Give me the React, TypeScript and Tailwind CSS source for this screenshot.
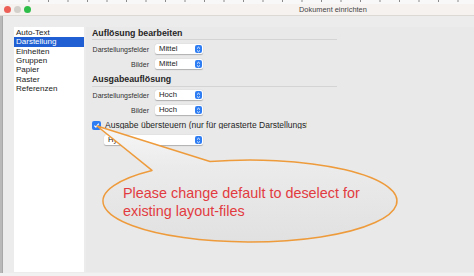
import React from "react";

const font = { fontFamily: '"Liberation Sans", Arial, sans-serif' };

function Stepper() {
  return (
    <div className="w-[7px] h-[8px] rounded-[2px] bg-[#2f7df2] flex items-center justify-center">
      <svg width="5" height="7" viewBox="0 0 5 7">
        <path d="M1 2.6 L2.5 1.2 L4 2.6" stroke="white" strokeWidth="0.9" fill="none" />
        <path d="M1 4.4 L2.5 5.8 L4 4.4" stroke="white" strokeWidth="0.9" fill="none" />
      </svg>
    </div>
  );
}

function Select({ value, wide }: { value: string; wide?: boolean }) {
  return (
    <div
      className={`${wide ? "w-[99px]" : "w-[48px]"} h-[10px] bg-white rounded-[2px] shadow-[0_0.5px_1px_rgba(0,0,0,0.25)] flex items-center justify-between pl-[4px] pr-[1px]`}
    >
      <span className="text-[7.7px] leading-none text-[#222]">{value}</span>
      <Stepper />
    </div>
  );
}

function Row({ label, value }: { label: string; value: string }) {
  return (
    <div className="flex items-center h-[10px]">
      <div className="w-[57px] text-right text-[7px] leading-none text-[#333]">{label}</div>
      <div className="ml-[6px]">
        <Select value={value} />
      </div>
    </div>
  );
}

export default function App() {
  const items = ["Auto-Text", "Darstellung", "Einheiten", "Gruppen", "Papier", "Raster", "Referenzen"];
  const ticks = Array.from({ length: 24 }, (_, i) => 29 + i * 19.5);
  return (
    <div className="relative w-[474px] h-[276px] overflow-hidden bg-[#ececec]" style={font}>
      {/* ruler */}
      <div className="h-[4px] bg-[#f8f8f8]">
        <svg width="474" height="4">
          {ticks.map((x, i) => (
            <line key={i} x1={x} y1="0" x2={x} y2="2" stroke="#8a8a8a" strokeWidth="1" />
          ))}
        </svg>
      </div>
      {/* title bar */}
      <div className="h-[12px] bg-[#f6f2ef] border-b border-[#dcd8d4] flex items-center relative">
        <div className="flex items-center gap-[3px] ml-[4px]">
          <div className="w-[7px] h-[7px] rounded-full bg-[#ec5f57]" />
          <div className="w-[7px] h-[7px] rounded-full bg-[#d3cfcb]" />
          <div className="w-[7px] h-[7px] rounded-full bg-[#2fbd4a]" />
        </div>
        <div className="ml-[268px] text-[7.4px] leading-none text-[#444]">Dokument einrichten</div>
      </div>
      {/* body */}
      <div className="flex h-[257px]">
        <div className="w-[3px] bg-[#b9b9b9] border-r border-[#a8a8a8]" />
        <div className="w-[11px]" />
        <div className="flex flex-col pt-[11px]">
          <div className="w-[70px] h-[245px] bg-white pt-[1px]">
            {items.map((it) => (
              <div
                key={it}
                className={`h-[9.45px] flex items-center pl-[2px] text-[8px] leading-none ${
                  it === "Darstellung" ? "bg-[#1f5fd3] text-white" : "text-[#1a1a1a]"
                }`}
              >
                {it}
              </div>
            ))}
          </div>
        </div>
        <div className="w-[2px]" />
        <div className="flex-1 flex flex-col pt-[11px]">
          <div className="h-[245px] bg-[#e9e9e9] pl-[6px] pt-[1px] flex flex-col">
            <div className="h-[11px] flex items-center text-[8.8px] font-bold leading-none text-[#262626]">
              Auflösung bearbeiten
            </div>
            <div className="h-px w-[245px] bg-[#d4d4d4]" />
            <div className="mt-[4px]">
              <Row label="Darstellungsfelder" value="Mittel" />
            </div>
            <div className="mt-[5px]">
              <Row label="Bilder" value="Mittel" />
            </div>
            <div className="mt-[5px] h-[11px] flex items-center text-[8.8px] font-bold leading-none text-[#262626]">
              Ausgabeauflösung
            </div>
            <div className="mt-[1px] h-px w-[245px] bg-[#d4d4d4]" />
            <div className="mt-[3px]">
              <Row label="Darstellungsfelder" value="Hoch" />
            </div>
            <div className="mt-[5px]">
              <Row label="Bilder" value="Hoch" />
            </div>
            <div className="mt-[5px] h-[10px] flex items-center">
              <div className="w-[9px] h-[9px] rounded-[2px] bg-[#2f7df2] flex items-center justify-center">
                <svg width="7" height="7" viewBox="0 0 7 7">
                  <path d="M1.3 3.6 L2.9 5.2 L5.8 1.6" stroke="white" strokeWidth="1.2" fill="none" />
                </svg>
              </div>
              <div className="ml-[4px] w-[202px] overflow-hidden whitespace-nowrap text-[8.5px] leading-none text-[#1f1f1f]">
                Ausgabe übersteuern (nur für gerasterte Darstellungsfelder)
              </div>
            </div>
            <div className="mt-[5px] ml-[12px]">
              <Select value="Hybrid" wide />
            </div>
          </div>
        </div>
      </div>
      <div className="h-[3px] bg-[#f1f1f1]" />

      {/* callout overlay */}
      <svg className="absolute left-0 top-0 pointer-events-none" width="474" height="276">
        <defs>
          <linearGradient id="cg" x1="0" y1="126" x2="0" y2="242" gradientUnits="userSpaceOnUse">
            <stop offset="0" stopColor="#f7f7f7" />
            <stop offset="0.35" stopColor="#ebebeb" />
            <stop offset="1" stopColor="#e1e1e1" />
          </linearGradient>
        </defs>
        <path
          d="M97 126 L210 161.55 A147 41 0 1 1 152 170.44 Z"
          fill="url(#cg)"
          stroke="#ee9b3c"
          strokeWidth="1.5"
          strokeLinejoin="round"
        />
      </svg>
      <div className="absolute left-[123px] top-[184px] text-[14.4px] leading-[18px] text-[#e23b3f] whitespace-nowrap">
        <div>Please change default to deselect for</div>
        <div>existing layout-files</div>
      </div>
    </div>
  );
}
